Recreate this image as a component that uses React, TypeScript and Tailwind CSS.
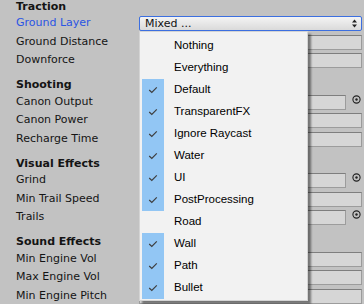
import React from 'react';

type Row = { label: string; kind?: 'popup' | 'object' | 'field'; active?: boolean };

const sections: { title: string; rows: Row[] }[] = [
  {
    title: 'Traction',
    rows: [
      { label: 'Ground Layer', kind: 'popup', active: true },
      { label: 'Ground Distance' },
      { label: 'Downforce' },
    ],
  },
  {
    title: 'Shooting',
    rows: [{ label: 'Canon Output', kind: 'object' }, { label: 'Canon Power' }, { label: 'Recharge Time' }],
  },
  {
    title: 'Visual Effects',
    rows: [{ label: 'Grind', kind: 'object' }, { label: 'Min Trail Speed' }, { label: 'Trails', kind: 'object' }],
  },
  {
    title: 'Sound Effects',
    rows: [{ label: 'Min Engine Vol' }, { label: 'Max Engine Vol' }, { label: 'Min Engine Pitch' }],
  },
];

const layers = [
  { name: 'Nothing', on: false },
  { name: 'Everything', on: false },
  { name: 'Default', on: true },
  { name: 'TransparentFX', on: true },
  { name: 'Ignore Raycast', on: true },
  { name: 'Water', on: true },
  { name: 'UI', on: true },
  { name: 'PostProcessing', on: true },
  { name: 'Road', on: false },
  { name: 'Wall', on: true },
  { name: 'Path', on: true },
  { name: 'Bullet', on: true },
];

function Field() {
  return <div className="h-[15px] flex-1 border border-[#9c9c9c] border-t-[#7e7e7e] bg-[#d6d6d6]" />;
}

function Picker() {
  return (
    <div className="flex w-[16px] items-center justify-end pr-[1px]">
      <svg width="9" height="9" viewBox="0 0 9 9">
        <circle cx="4.5" cy="4.5" r="3.6" fill="none" stroke="#222" strokeWidth="1.1" />
        <circle cx="4.5" cy="4.5" r="1.2" fill="#222" />
      </svg>
    </div>
  );
}

function Popup() {
  return (
    <div className="flex h-[15px] flex-1 items-center rounded-[2px] border border-[#3c6fe0] bg-gradient-to-b from-[#f4f4f4] to-[#dadada] pl-[5px] pr-[4px]">
      <span className="flex-1 text-[11px] leading-none text-[#111]">Mixed ...</span>
      <svg width="5" height="9" viewBox="0 0 5 9">
        <path d="M2.5 0.5 L5 3.5 L0 3.5 Z" fill="#222" />
        <path d="M2.5 8.5 L5 5.5 L0 5.5 Z" fill="#222" />
      </svg>
    </div>
  );
}

export default function App() {
  return (
    <div
      className="relative h-[304px] w-[364px] overflow-hidden bg-[#c2c2c2] text-[#141414]"
      style={{ fontFamily: '"DejaVu Sans", Verdana, sans-serif' }}
    >
      <div className="mt-[-1px] flex flex-col gap-[7px]">
        {sections.map((s) => (
          <div key={s.title} className="flex flex-col">
            <div className="flex h-[16px] items-center pl-4 text-[11px] font-bold">{s.title}</div>
            {s.rows.map((r) => (
              <div key={r.label} className="flex h-[18.5px] items-start pr-[2px] pt-[1px]">
                <div
                  className={`flex h-[15px] w-[139px] items-center pl-4 text-[11px] ${r.active ? 'text-[#2a55e4]' : ''}`}
                >
                  {r.label}
                </div>
                {r.kind === 'popup' ? <Popup /> : <Field />}
                {r.kind === 'object' && <Picker />}
              </div>
            ))}
          </div>
        ))}
      </div>

      {/* layer mask dropdown */}
      <div
        className="absolute left-[139px] top-[31px] flex h-[270px] w-[169px] flex-col border border-[#d4d4d4] bg-[#f2f2f2] pl-[2px] pt-[3px] shadow-[3px_3px_2px_rgba(0,0,0,0.45)]"
        style={{ fontFamily: '"Liberation Sans", Arial, sans-serif' }}
      >
        {layers.map((l) => (
          <div key={l.name} className="flex h-[22px] items-center">
            <div className={`flex h-[22px] w-[22px] items-center justify-center ${l.on ? 'bg-[#92c6f4]' : ''}`}>
              {l.on && (
                <svg width="10" height="8" viewBox="0 0 10 8">
                  <path d="M1.2 4 L3.8 6.4 L8.8 1.4" fill="none" stroke="#3d3d3d" strokeWidth="1.2" />
                </svg>
              )}
            </div>
            <span className="ml-[10px] text-[11.5px] text-black">{l.name}</span>
          </div>
        ))}
      </div>
    </div>
  );
}
